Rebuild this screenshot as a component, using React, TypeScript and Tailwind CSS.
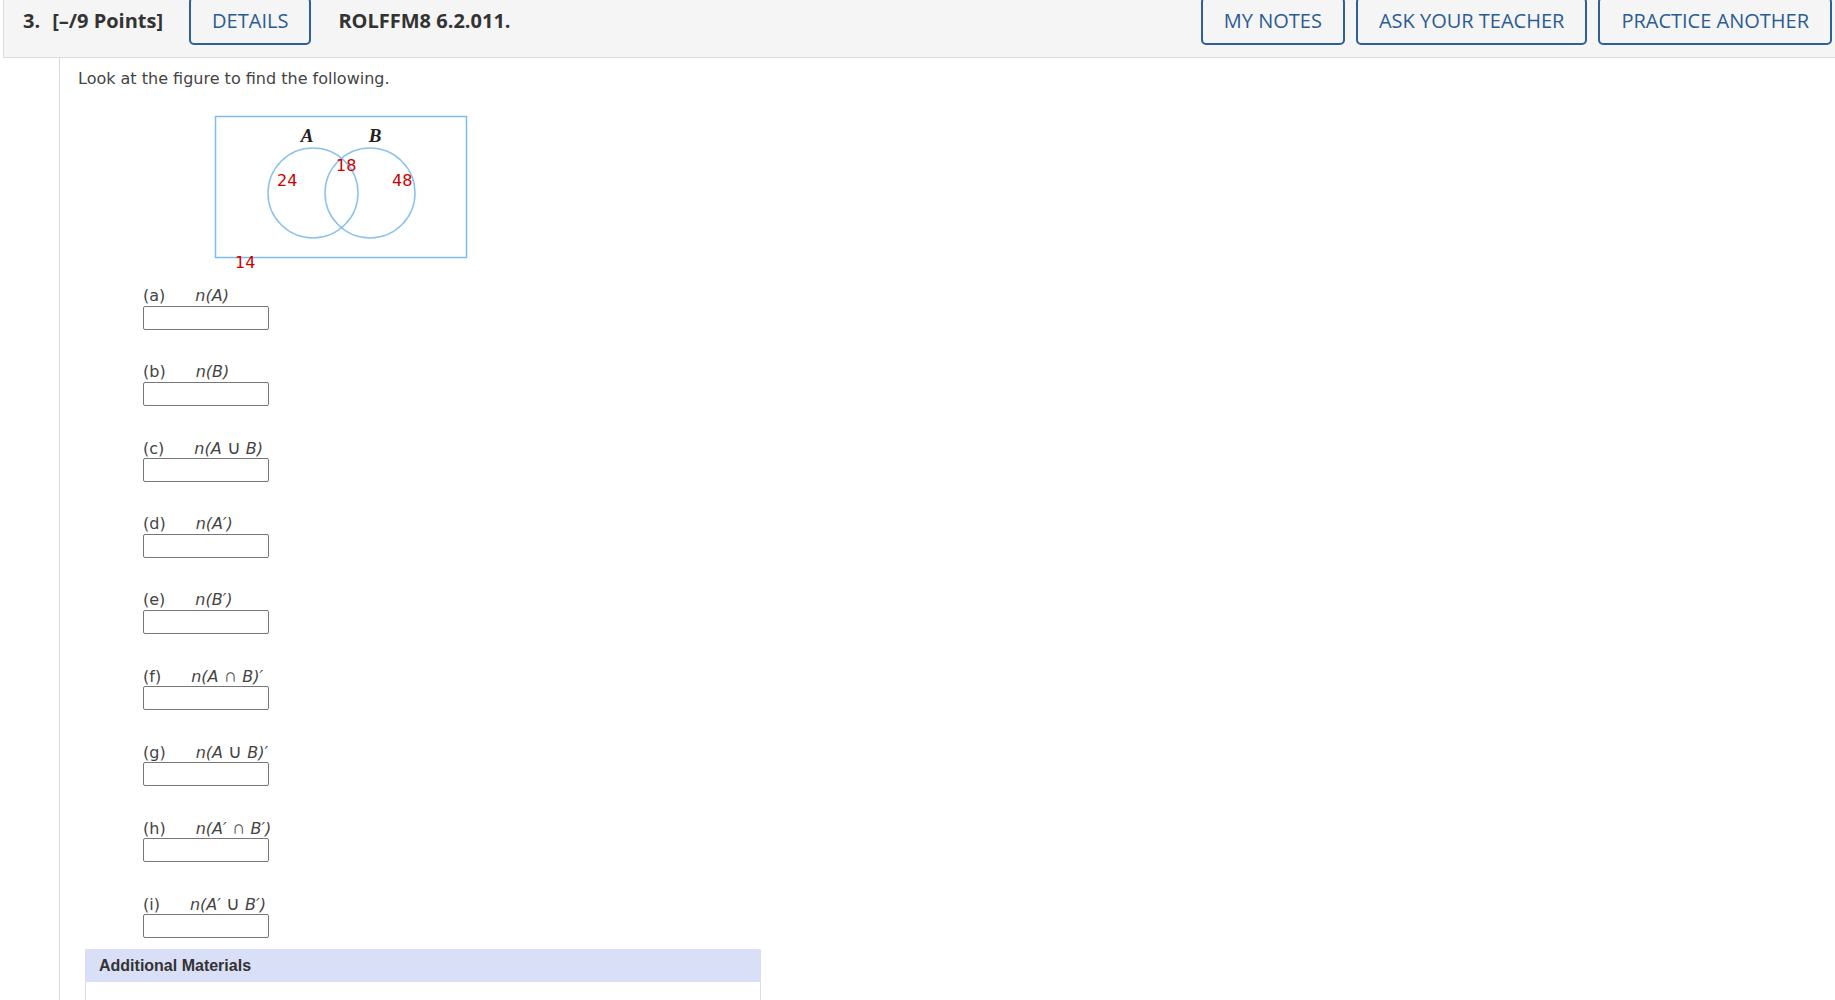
import React from "react";

const Sym = ({ c }: { c: string }) => <span className="text-[19px] leading-none not-italic font-['Liberation_Sans',sans-serif] italic">{c}</span>;

const items: { key: string; label: React.ReactNode }[] = [
  { key: "a", label: <>n(A)</> },
  { key: "b", label: <>n(B)</> },
  { key: "c", label: <>n(A <Sym c="∪" /> B)</> },
  { key: "d", label: <>n(A′)</> },
  { key: "e", label: <>n(B′)</> },
  { key: "f", label: <>n(A <Sym c="∩" /> B)′</> },
  { key: "g", label: <>n(A <Sym c="∪" /> B)′</> },
  { key: "h", label: <>n(A′ <Sym c="∩" /> B′)</> },
  { key: "i", label: <>n(A′ <Sym c="∪" /> B′)</> },
];

function VennFigure() {
  return (
    <svg width="260" height="160" viewBox="0 0 260 160" className="block">
      <rect x="1.5" y="1.5" width="251" height="141" fill="none" stroke="#7dbcef" strokeWidth="1.5" />
      <circle cx="99" cy="78" r="45" fill="none" stroke="#8cc3ea" strokeWidth="1.5" />
      <circle cx="156" cy="78" r="45" fill="none" stroke="#8cc3ea" strokeWidth="1.5" />
      <text x="93" y="27" textAnchor="middle" fontFamily="'Liberation Serif', serif" fontStyle="italic" fontWeight="bold" fontSize="19" fill="#222">
        A
      </text>
      <text x="161" y="27" textAnchor="middle" fontFamily="'Liberation Serif', serif" fontStyle="italic" fontWeight="bold" fontSize="19" fill="#222">
        B
      </text>
      <g fontFamily="'DejaVu Sans', sans-serif" fontSize="16" fill="#cc0000">
        <text x="63" y="71">24</text>
        <text x="122" y="56">18</text>
        <text x="178" y="71">48</text>
        <text x="21" y="153">14</text>
      </g>
    </svg>
  );
}

function Btn({ children }: { children: React.ReactNode }) {
  return (
    <button className="h-[48px] px-[21px] border-2 border-[#2e5f96] rounded-[5px] text-[20px] font-medium text-[#2b5c93] font-['Open_Sans',sans-serif] whitespace-nowrap bg-transparent">
      {children}
    </button>
  );
}

export default function App() {
  return (
    <div className="w-[1835px] h-[1000px] overflow-hidden bg-white text-[#444] font-['DejaVu_Sans',sans-serif]">
      <header className="-mt-[3px] ml-[3px] h-[61px] flex items-start bg-[#f5f5f5] border-l border-b border-[#dcdcdc] pl-[19px] pr-[3px]">
        <div className="h-[48px] flex items-center font-['Open_Sans',sans-serif] font-bold text-[20px] text-[#333]">
          <span>3.</span>
          <span className="ml-[12px]">[–/9 Points]</span>
        </div>
        <div className="ml-[26px]">
          <Btn>DETAILS</Btn>
        </div>
        <div className="ml-[27px] h-[48px] flex items-center font-['Open_Sans',sans-serif] font-bold text-[20px] text-[#333]">
          ROLFFM8 6.2.011.
        </div>
        <div className="ml-auto flex gap-[11px]">
          <Btn>MY NOTES</Btn>
          <Btn>ASK YOUR TEACHER</Btn>
          <Btn>PRACTICE ANOTHER</Btn>
        </div>
      </header>

      <main className="ml-[59px] border-l border-[#dcdcdc] pl-[18px] pt-[11px] h-[942px]">
        <p className="text-[16px] leading-[20px]">Look at the figure to find the following.</p>

        <div className="ml-[136px] mt-[26px]">
          <VennFigure />
        </div>

        <div className="ml-[65px] mt-[11px] flex flex-col gap-[32px]">
          {items.map((it) => (
            <div key={it.key}>
              <div className="flex items-baseline text-[16px] leading-[20px] h-[20px]">
                <span>({it.key})</span>
                <span className="ml-[30px] italic">{it.label}</span>
              </div>
              <input type="text" className="block w-[126px] h-[24px] border border-[#777] rounded-[2px] bg-white" />
            </div>
          ))}
        </div>

        <div className="ml-[7px] mt-[11px] w-[676px]">
          <div className="h-[33px] bg-[#d9dff6] flex items-center pl-[14px] font-['Liberation_Sans',sans-serif] font-bold text-[16px] text-[#333]">
            Additional Materials
          </div>
          <div className="h-[40px] border-x border-[#dcdcdc]" />
        </div>
      </main>
    </div>
  );
}
